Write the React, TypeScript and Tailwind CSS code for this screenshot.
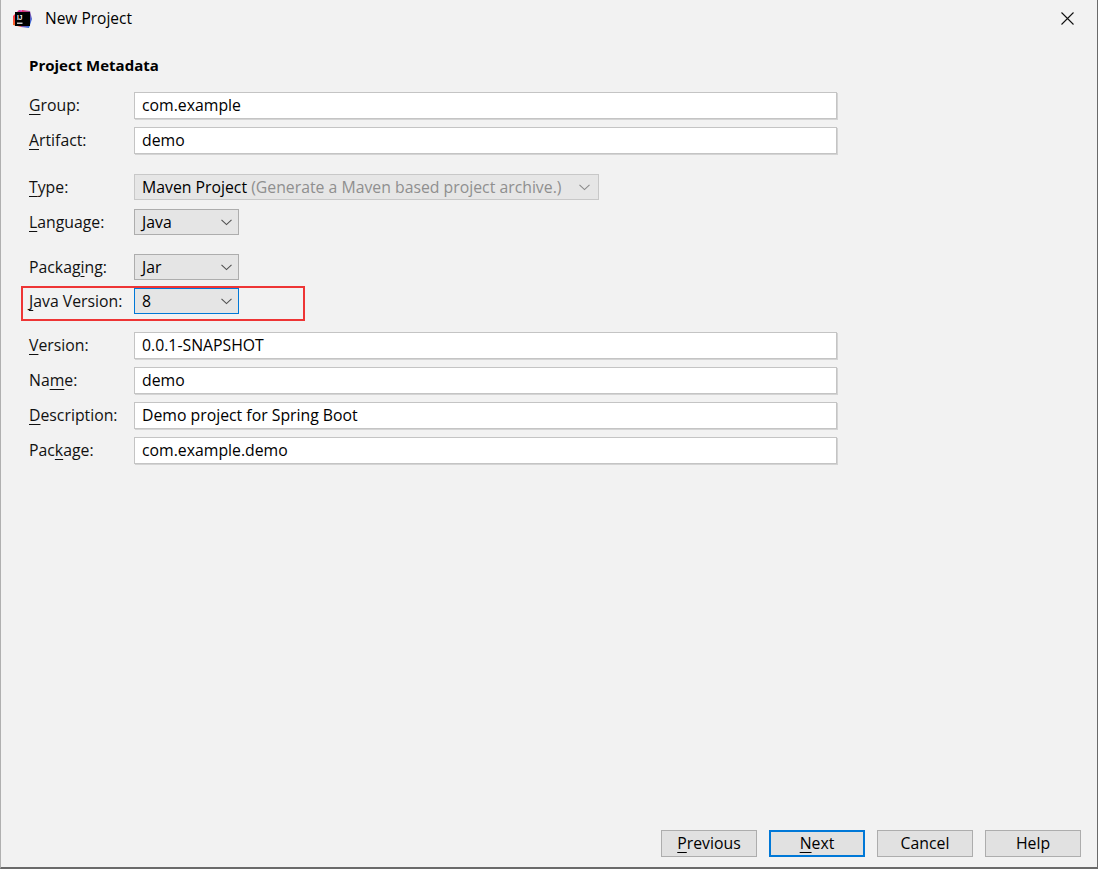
import type { ReactNode } from "react";

const font = { fontFamily: '"Open Sans", "Noto Sans", "Liberation Sans", sans-serif' };

// label with an underlined mnemonic letter
function Mnemonic({ text, at }: { text: string; at: number }) {
  return (
    <>
      {text.slice(0, at)}
      <span className="underline decoration-1 underline-offset-[3px]">{text[at]}</span>
      {text.slice(at + 1)}
    </>
  );
}

function Chevron({ muted = false }: { muted?: boolean }) {
  return (
    <svg width="11" height="7" viewBox="0 0 11 7" className="shrink-0">
      <path
        d="M0.5 0.8 L5.5 5.6 L10.5 0.8"
        fill="none"
        stroke={muted ? "#8a8a8a" : "#505050"}
        strokeWidth="1.1"
      />
    </svg>
  );
}

function Row({ label, mt, children }: { label: ReactNode; mt: string; children: ReactNode }) {
  return (
    <div className={`relative flex items-center ${mt}`}>
      <div className="w-[105px] shrink-0 pt-px text-[15.8px] text-[#111]">{label}</div>
      {children}
    </div>
  );
}

function TextField({ value }: { value: string }) {
  return (
    <div className="flex h-[27px] w-[703px] items-center border border-[#c4c4c4] bg-white pl-[7px] pt-px text-[15.8px] text-black shadow-[1px_1px_0_#d4d4d4]">
      {value}
    </div>
  );
}

function Combo({ value, focused = false }: { value: string; focused?: boolean }) {
  return (
    <div
      className={`flex h-[26px] w-[105px] items-center justify-between bg-[#e5e5e5] pl-[7px] pr-[6px] pt-px text-[15.8px] text-black ${
        focused ? "border border-[#0078d7]" : "border border-[#adadad]"
      }`}
    >
      <span>{value}</span>
      <Chevron />
    </div>
  );
}

function IdeaLogo() {
  return (
    <svg width="21" height="20" viewBox="0 0 21 20">
      <defs>
        <linearGradient id="g1" x1="0" y1="1" x2="1" y2="0">
          <stop offset="0" stopColor="#f97a12" />
          <stop offset="0.45" stopColor="#fe2857" />
          <stop offset="1" stopColor="#b345f1" />
        </linearGradient>
        <linearGradient id="g2" x1="0" y1="0" x2="1" y2="1">
          <stop offset="0" stopColor="#fe2857" />
          <stop offset="1" stopColor="#087cfa" />
        </linearGradient>
      </defs>
      <path d="M1 7 L7 1 L14 2 L9 18 L1 16 Z" fill="url(#g1)" />
      <path d="M10 1 L18 2 L20 10 L17 19 L9 18 Z" fill="url(#g2)" />
      <rect x="3" y="3" width="15" height="14" fill="#000" />
      <text x="5" y="10.5" fontSize="6.5" fontWeight="700" fill="#fff" style={{ fontFamily: '"Liberation Sans", sans-serif' }}>
        IJ
      </text>
      <rect x="5" y="13.6" width="5.5" height="1.2" fill="#fff" />
    </svg>
  );
}

function Button({ children, primary = false }: { children: ReactNode; primary?: boolean }) {
  return (
    <div
      className={`flex h-[27px] w-[96px] items-center justify-center bg-[#e1e1e1] text-[15.8px] text-black ${
        primary ? "border-2 border-[#0078d7]" : "border border-[#adadad]"
      }`}
    >
      {children}
    </div>
  );
}

export default function App() {
  return (
    <div className="h-[869px] w-[1098px] overflow-hidden" style={font}>
      <div className="flex h-full w-full flex-col border-b-2 border-l border-r border-b-[#6a6a6a] border-l-[#b0b0b0] border-r-[#6a6a6a] bg-[#f2f2f2]">
        {/* title bar */}
        <div className="flex h-[37px] shrink-0 items-center pl-[11px]">
          <IdeaLogo />
          <span className="ml-[12px] text-[15.5px] text-black">New Project</span>
          <div className="flex-1" />
          <svg width="13" height="13" viewBox="0 0 13 13" className="mr-[23px]">
            <path d="M0.5 0.5 L12.5 12.5 M12.5 0.5 L0.5 12.5" stroke="#111" strokeWidth="1.1" />
          </svg>
        </div>

        {/* form */}
        <div className="flex-1 pl-[28px]">
          <div className="mt-[18px] h-[20px] text-[15px] font-bold leading-[20px] text-black">Project Metadata</div>

          <Row label={<Mnemonic text="Group:" at={0} />} mt="mt-[17px]">
            <TextField value="com.example" />
          </Row>
          <Row label={<Mnemonic text="Artifact:" at={0} />} mt="mt-[8px]">
            <TextField value="demo" />
          </Row>

          <Row label={<Mnemonic text="Type:" at={0} />} mt="mt-[20px]">
            <div className="flex h-[26px] w-[465px] items-center justify-between border border-[#c8c8c8] bg-[#e6e6e6] pl-[7px] pr-[8px] pt-px text-[15.8px]">
              <span className="whitespace-nowrap text-black">
                Maven Project <span className="text-[#8f8f8f]">(Generate a Maven based project archive.)</span>
              </span>
              <Chevron muted />
            </div>
          </Row>
          <Row label={<Mnemonic text="Language:" at={0} />} mt="mt-[9px]">
            <Combo value="Java" />
          </Row>
          <Row label={<Mnemonic text="Packaging:" at={6} />} mt="mt-[19px]">
            <Combo value="Jar" />
          </Row>
          <Row label={<Mnemonic text="Java Version:" at={0} />} mt="mt-[8px]">
            <Combo value="8" focused />
            <div className="pointer-events-none absolute left-[-8px] top-[-2px] h-[35px] w-[284px] border-2 border-[#ee3535]" />
          </Row>

          <Row label={<Mnemonic text="Version:" at={0} />} mt="mt-[18px]">
            <TextField value="0.0.1-SNAPSHOT" />
          </Row>
          <Row label={<Mnemonic text="Name:" at={2} />} mt="mt-[8px]">
            <TextField value="demo" />
          </Row>
          <Row label={<Mnemonic text="Description:" at={0} />} mt="mt-[8px]">
            <TextField value="Demo project for Spring Boot" />
          </Row>
          <Row label={<Mnemonic text="Package:" at={3} />} mt="mt-[8px]">
            <TextField value="com.example.demo" />
          </Row>
        </div>

        {/* footer buttons */}
        <div className="flex shrink-0 justify-end gap-[12px] pb-[10px] pr-[16px]">
          <Button>
            <Mnemonic text="Previous" at={0} />
          </Button>
          <Button primary>
            <Mnemonic text="Next" at={0} />
          </Button>
          <Button>Cancel</Button>
          <Button>Help</Button>
        </div>
      </div>
    </div>
  );
}
